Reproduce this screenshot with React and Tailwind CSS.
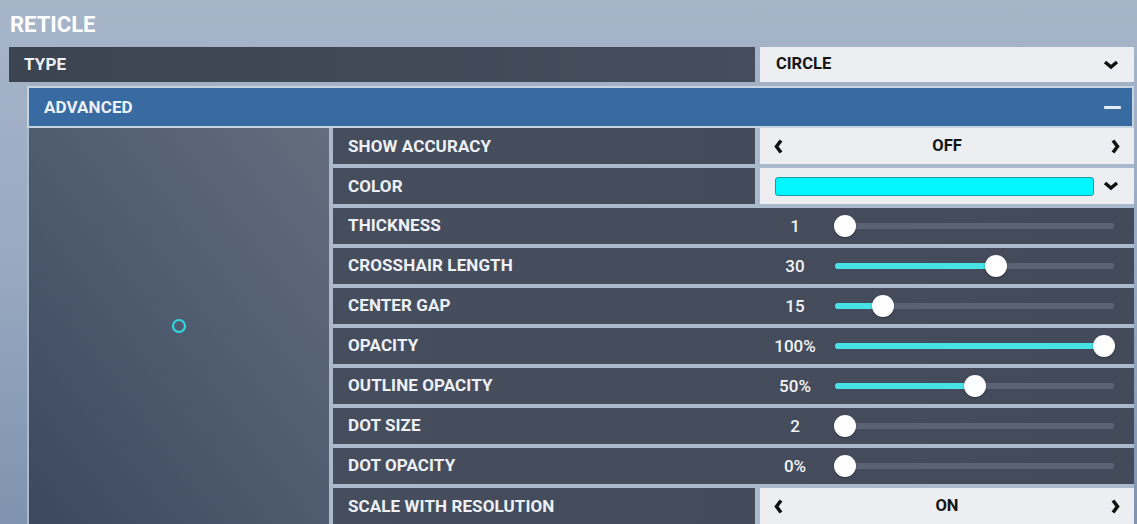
import React from 'react';

const FONT = { fontFamily: 'Roboto, "Liberation Sans", sans-serif' };

const SLIDERS = {
  THICKNESS: { value: '1', pct: 0 },
  'CROSSHAIR LENGTH': { value: '30', pct: 0.583 },
  'CENTER GAP': { value: '15', pct: 0.147 },
  OPACITY: { value: '100%', pct: 1 },
  'OUTLINE OPACITY': { value: '50%', pct: 0.502 },
  'DOT SIZE': { value: '2', pct: 0 },
  'DOT OPACITY': { value: '0%', pct: 0 },
};

function ChevronDown() {
  return (
    <svg width="16" height="10" viewBox="0 0 16 10" className="shrink-0">
      <path d="M2 2 L8 7 L14 2" fill="none" stroke="#111" strokeWidth="3.5" strokeLinejoin="miter" />
    </svg>
  );
}

function ChevronSide({ dir }) {
  const d = dir === 'left' ? 'M7 1.5 L2.5 7.5 L7 13.5' : 'M2 1.5 L6.5 7.5 L2 13.5';
  return (
    <svg width="9" height="15" viewBox="0 0 9 15" className="shrink-0">
      <path d={d} fill="none" stroke="#111" strokeWidth="3.5" />
    </svg>
  );
}

function Label({ children }) {
  return (
    <span className="text-[17px] font-bold tracking-[0.1px] text-[#eef1f5] leading-none">{children}</span>
  );
}

function Slider({ pct }) {
  // thumb centre travels between 10px and 269px of the 279px track
  const center = 10 + pct * 259;
  return (
    <div className="relative h-[22px] w-[279px] shrink-0">
      <div className="absolute left-0 right-0 top-[8px] h-[6px] rounded-full bg-[#5b6273]" />
      {pct > 0 && (
        <div
          className="absolute left-0 top-[8px] h-[6px] rounded-full bg-[#46e2e6]"
          style={{ width: center }}
        />
      )}
      <div
        className="absolute top-0 h-[22px] w-[22px] rounded-full bg-white shadow-[0_1px_2px_rgba(0,0,0,0.35)]"
        style={{ left: center - 11 }}
      />
    </div>
  );
}

function SliderRow({ label }) {
  const s = SLIDERS[label];
  return (
    <div className="flex h-[36px] items-center bg-linear-to-r from-[#464e5e] to-[#434b5a] pl-[15px] pr-[20px]">
      <div className="flex-1">
        <Label>{label}</Label>
      </div>
      <div className="w-[80px] pt-[1px] text-center text-[17px] font-medium text-[#f2f4f7]">{s.value}</div>
      <Slider pct={s.pct} />
    </div>
  );
}

function ToggleRow({ label, value }) {
  return (
    <div className="flex h-[36px] gap-[5px]">
      <div className="flex flex-1 items-center bg-linear-to-r from-[#464e5e] to-[#434b5a] pl-[15px]">
        <Label>{label}</Label>
      </div>
      <div className="flex w-[374px] items-center justify-between bg-[#eceef2] pl-[14px] pr-[14px]">
        <ChevronSide dir="left" />
        <span className="text-[16.5px] font-bold text-[#151515]">{value}</span>
        <ChevronSide dir="right" />
      </div>
    </div>
  );
}

function ColorRow() {
  return (
    <div className="flex h-[36px] gap-[5px]">
      <div className="flex flex-1 items-center bg-linear-to-r from-[#464e5e] to-[#434b5a] pl-[15px]">
        <Label>COLOR</Label>
      </div>
      <div className="flex w-[374px] items-center gap-[9px] bg-[#eceef2] pl-[15px] pr-[15px]">
        <div className="h-[19px] flex-1 rounded-[3px] border border-[#1e9aa3] bg-[#00f7ff]" />
        <ChevronDown />
      </div>
    </div>
  );
}

export default function App() {
  return (
    <div
      className="flex h-[524px] w-[1137px] flex-col overflow-hidden bg-linear-to-b from-[#a7b5c9] via-[#98a9c0] to-[#7f93b0] pl-[9px] pr-[3px]"
      style={FONT}
    >
      {/* header */}
      <div className="h-[47px] pl-[1px] pt-[12px] text-[22px] font-bold leading-[26px] text-white">RETICLE</div>

      {/* type dropdown */}
      <div className="flex h-[35px] gap-[5px]">
        <div className="flex flex-1 items-center bg-linear-to-r from-[#3c4351] to-[#464d5c] pl-[15px]">
          <Label>TYPE</Label>
        </div>
        <div className="flex w-[374px] items-center justify-between bg-[#eceef2] pl-[16px] pr-[15px]">
          <span className="text-[16.5px] font-bold text-[#151515]">CIRCLE</span>
          <ChevronDown />
        </div>
      </div>

      {/* advanced section */}
      <div className="ml-[18px] mt-[4px] flex flex-1 flex-col bg-[#abb9cc]">
        <div className="flex h-[42px] items-center justify-between border-2 border-[#c8d3e2] bg-[#386ba2] pl-[15px] pr-[11px]">
          <Label>ADVANCED</Label>
          <div className="h-[3px] w-[17px] rounded-[1px] bg-[#e4ebf4]" />
        </div>

        <div className="flex flex-1 gap-[4px] pl-[2px]">
          {/* reticle preview */}
          <div className="flex w-[300px] items-center justify-center bg-linear-to-bl from-[#626e7d] via-[#4f5c70] to-[#3c485d]">
            <svg width="16" height="16" viewBox="0 0 16 16">
              <circle cx="8" cy="8" r="6" fill="none" stroke="#2ed6df" strokeWidth="2.2" />
            </svg>
          </div>

          {/* settings rows */}
          <div className="flex flex-1 flex-col gap-[4px]">
            <ToggleRow label="SHOW ACCURACY" value="OFF" />
            <ColorRow />
            <SliderRow label="THICKNESS" />
            <SliderRow label="CROSSHAIR LENGTH" />
            <SliderRow label="CENTER GAP" />
            <SliderRow label="OPACITY" />
            <SliderRow label="OUTLINE OPACITY" />
            <SliderRow label="DOT SIZE" />
            <SliderRow label="DOT OPACITY" />
            <ToggleRow label="SCALE WITH RESOLUTION" value="ON" />
          </div>
        </div>
      </div>
    </div>
  );
}
